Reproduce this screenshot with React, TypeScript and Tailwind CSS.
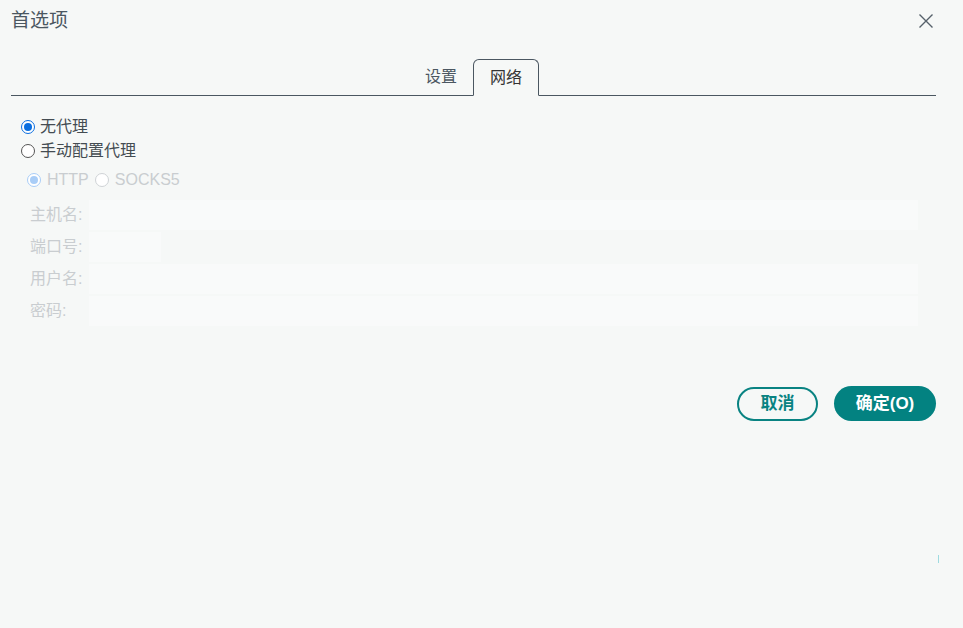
import React from "react";

const FONT = { fontFamily: '"Liberation Sans", "Noto Sans CJK SC", sans-serif' };

function Radio({ checked, disabled }: { checked?: boolean; disabled?: boolean }) {
  const ring = disabled ? (checked ? "border-[#a9cdf7]" : "border-[#cfd3d6]") : checked ? "border-[#0b6fe0]" : "border-[#555]";
  const dot = disabled ? "bg-[#a9cdf7]" : "bg-[#0b6fe0]";
  return (
    <span className={`w-[14px] h-[14px] rounded-full border ${ring} ${checked ? "border-[1.5px]" : ""} bg-white flex items-center justify-center shrink-0`}>
      {checked && <span className={`w-[8px] h-[8px] rounded-full ${dot}`} />}
    </span>
  );
}

function Field({ label, short }: { label: string; short?: boolean }) {
  return (
    <div className="flex items-center h-[30px]">
      <span className="w-[78px] pl-[19px] whitespace-nowrap text-[16px] text-[#c9cdd0]">{label}</span>
      <div className={`${short ? "w-[72px]" : "w-[829px]"} h-[30px] bg-[#f9fafa]`} />
    </div>
  );
}

export default function App() {
  return (
    <div className="w-[963px] h-[628px] bg-[#f6f8f7] relative overflow-hidden" style={FONT}>
      <div className="flex items-center justify-between pl-[11px] pr-[29px] h-[41px]">
        <h1 className="text-[19px] text-[#4b5761] leading-none">首选项</h1>
        <svg width="16" height="16" viewBox="0 0 16 16" className="text-[#56616a]">
          <path d="M1.5 1.5l13 13M14.5 1.5l-13 13" stroke="currentColor" strokeWidth="1.4" />
        </svg>
      </div>

      <div className="ml-[11px] mr-[27px] mt-[18px] flex items-end border-b border-[#4b5761] h-[37px] pl-[398px]">
        <div className="px-[16px] h-[36px] flex items-center text-[16px] text-[#4b5761]">设置</div>
        <div className="px-[16px] h-[37px] -mb-px flex items-center text-[16px] text-[#333] border border-[#4b5761] border-b-[#f6f8f7] rounded-t-[6px] bg-[#f6f8f7]">
          网络
        </div>
      </div>

      <div className="pl-[21px] pt-[21px] text-[16px] text-[#444c52]">
        <label className="flex items-center gap-[5px] h-[20px]">
          <Radio checked />
          <span>无代理</span>
        </label>
        <label className="flex items-center gap-[5px] h-[20px] mt-[4px]">
          <Radio />
          <span>手动配置代理</span>
        </label>
        <div className="flex items-center gap-[6px] h-[20px] mt-[9px] ml-[6px] text-[#c9cdd0]">
          <Radio checked disabled />
          <span>HTTP</span>
          <Radio disabled />
          <span>SOCKS5</span>
        </div>
      </div>

      <div className="mt-[10px] pl-[11px] flex flex-col gap-[2px]">
        <Field label="主机名:" />
        <Field label="端口号:" short />
        <Field label="用户名:" />
        <Field label="密码:" />
      </div>

      <div className="flex justify-end items-center gap-[16px] pr-[27px] mt-[60px]">
        <button className="w-[81px] h-[34px] rounded-full border-2 border-[#098382] text-[#098382] font-bold text-[17px]">取消</button>
        <button className="w-[102px] h-[35px] rounded-full bg-[#038281] text-white font-bold text-[17px]">确定(O)</button>
      </div>

      <span className="absolute left-[938px] top-[555px] w-px h-[8px] bg-[#9fdbe0]" />
    </div>
  );
}
